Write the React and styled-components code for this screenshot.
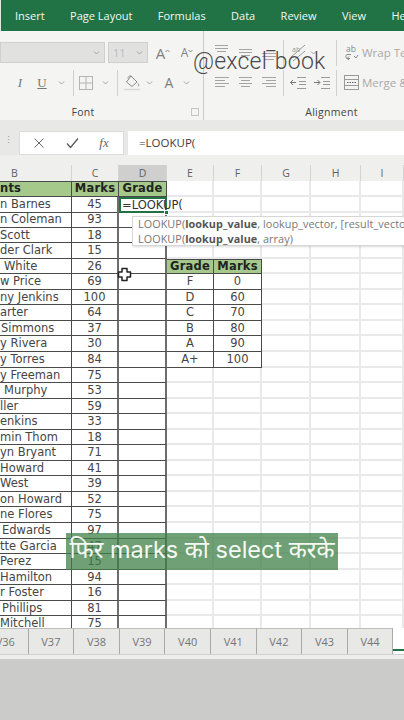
import styled, { createGlobalStyle } from "styled-components";

const GlobalStyle = createGlobalStyle`
  html, body { margin: 0; padding: 0; background: #fff; }
  body { font-family: "Open Sans", "Liberation Sans", sans-serif; }
`;

const Page = styled.div`
  position: relative;
  width: 404px;
  height: 720px;
  overflow: hidden;
  display: flex;
  flex-direction: column;
`;

/* ribbon */
const TabBar = styled.div`
  height: 31px;
  flex: none;
  background: #217346;
  display: flex;
  align-items: center;
  gap: 25.4px;
  padding-left: 15px;
  box-shadow: inset 1px 0 0 #dfe9e3;
  padding-bottom: 1px;
  box-sizing: border-box;
`;

const TabName = styled.span`
  color: #f2f7f4;
  font-size: 11px;
  font-weight: 500;
  white-space: nowrap;
`;

const Ribbon = styled.div`
  height: 89px;
  flex: none;
  background: #f4f4f3;
  display: flex;
`;

const Group = styled.div`
  flex: none;
  width: ${(p) => p.$w}px;
  box-sizing: border-box;
  border-right: 1.5px solid #cbcbcb;
  display: flex;
  flex-direction: column;
  padding-top: 11px;
`;

const ToolRow = styled.div`
  height: 21px;
  display: flex;
  align-items: center;
  margin-bottom: 9px;
`;

const Slot = styled.div`
  flex: none;
  width: ${(p) => p.$w}px;
  height: 100%;
  display: flex;
  align-items: center;
  justify-content: center;
  color: #7d7d7d;
  font-size: ${(p) => p.$size || 12}px;
`;

const Sep = styled.div`
  flex: none;
  width: 1px;
  height: 26px;
  background: #cfcfcf;
`;

const FontBox = styled.div`
  flex: none;
  width: ${(p) => p.$w}px;
  height: 21px;
  margin-right: ${(p) => p.$gap}px;
  box-sizing: border-box;
  background: #e1e1e0;
  border: 1px solid #cfcfcf;
  display: flex;
  align-items: center;
  justify-content: space-between;
  padding: 0 4px 0 4px;
  color: #bcbcbc;
  font-size: 11px;
`;

const GroupLabel = styled.div`
  margin-top: auto;
  height: 15px;
  margin-bottom: 1px;
  display: flex;
  align-items: center;
  justify-content: center;
  position: relative;
  padding-right: ${(p) => p.$pad}px;
  font-size: 10.5px;
  letter-spacing: 0.3px;
  color: #444;
`;

const Launcher = styled.span`
  position: absolute;
  right: 4px;
  top: 4px;
  width: 6px;
  height: 6px;
  border: 1px solid #c4c4c4;
`;

const ToolText = styled.span`
  color: #a9a9a9;
  font-size: 11.5px;
  margin-left: 3px;
  white-space: nowrap;
`;

const BigA = styled.span`
  font-family: "Open Sans", sans-serif;
  font-size: ${(p) => p.$size}px;
  color: #808080;
`;

const Letter = styled.span`
  font-family: "Liberation Serif", serif;
  font-size: 13px;
  font-style: ${(p) => (p.$italic ? "italic" : "normal")};
  text-decoration: ${(p) => (p.$under ? "underline" : "none")};
  color: #777;
`;

/* formula bar */
const FormulaStrip = styled.div`
  flex: none;
  background: #e8e8e7;
  box-sizing: border-box;
  padding: 11px 0 0 4px;
  display: flex;
  border-bottom: 10px solid #efefee;
  height: 45px;
`;

const Grip = styled.div`
  width: 15px;
  flex: none;
  color: #9a9a9a;
  font-size: 9px;
  line-height: 6px;
  padding-top: 6px;
`;

const NameButtons = styled.div`
  flex: none;
  width: 105px;
  background: #fff;
  border: 1px solid #dcdcdc;
  box-sizing: border-box;
  margin-right: 4px;
  display: flex;
  align-items: center;
  justify-content: space-around;
  padding: 0 4px 0 3px;
  height: 24px;
  color: #5d5d5d;
`;

const FxLabel = styled.span`
  font-family: "Liberation Serif", serif;
  font-style: italic;
  font-size: 13px;
  color: #666;
`;

const FormulaInput = styled.div`
  flex: 1;
  background: #fff;
  height: 24px;
  box-sizing: border-box;
  padding-left: 11px;
  line-height: 24px;
  font-size: 11.5px;
  color: #3c3c3c;
`;

/* sheet */
const Sheet = styled.div`
  position: relative;
  flex: none;
  height: 463px;
  overflow: hidden;
  background: #fff;
`;

const columns = "72px 47px 48px 47px 48px 49px 50px 43px";

const HeaderRow = styled.div`
  display: grid;
  grid-template-columns: ${columns};
  height: 16px;
  background: #efefee;
`;

const HeaderCell = styled.div`
  border-right: 1px solid #d4d4d4;
  background: ${(p) => (p.$active ? "#cfcfce" : "transparent")};
  text-align: center;
  padding-right: ${(p) => p.$pad || 0}px;
  font-family: "Open Sans", sans-serif;
  font-size: 10.5px;
  line-height: 16px;
  color: #5f5f5f;
`;

const Row = styled.div`
  display: grid;
  grid-template-columns: ${columns};
  height: 15.55px;
`;

const Cell = styled.div`
  box-sizing: border-box;
  position: relative;
  white-space: nowrap;
  overflow: ${(p) => (p.$active ? "visible" : "hidden")};
  z-index: ${(p) => (p.$active ? 2 : "auto")};
  font-family: "DejaVu Sans", Verdana, sans-serif;
  font-size: 11.5px;
  line-height: 14.5px;
  color: #454545;
  text-align: ${(p) => (p.$left ? "left" : "center")};
  padding-left: ${(p) => p.$indent || 0}px;
  border-right: ${(p) => (p.$rule === "thick" ? "2px solid #6d6d6d" : p.$table ? "1px solid #4a4a4a" : "2px solid #e9e9e9")};
  border-bottom: ${(p) => (p.$table ? "1px solid #4a4a4a" : "2px solid #e9e9e9")};
  ${(p) => p.$topEdge && "box-shadow: inset 0 1px 0 #4a4a4a;"}
  ${(p) =>
    p.$head &&
    `background: #a5c98a; font-weight: 700; color: #222; letter-spacing: 0.2px;`}
  ${(p) =>
    p.$active &&
    `box-shadow: inset 0 0 0 2px #217346; border: none; line-height: 16px; padding-left: 3px; text-align: left; color: #333;
     &::after { content: ""; position: absolute; right: -2px; bottom: -2px; width: 5px; height: 5px; background: #217346; border: 1px solid #fff; box-sizing: border-box; }`}
`;

const Tooltip = styled.div`
  position: absolute;
  left: 132px;
  top: 51px;
  width: 300px;
  height: 30px;
  box-sizing: border-box;
  background: #fff;
  border: 1px solid #d6d6d6;
  box-shadow: 1px 1px 2px rgba(0, 0, 0, 0.15);
  padding: 0 0 0 5px;
  font-family: "Open Sans", sans-serif;
  font-size: 10.8px;
  letter-spacing: 0.08px;
  line-height: 14.5px;
  color: #777;
  white-space: nowrap;
  z-index: 3;

  b {
    color: #555;
    font-weight: 700;
  }
`;

const CursorMark = styled.svg`
  position: absolute;
  left: 117px;
  top: 102px;
  z-index: 3;
`;

/* sheet tabs */
const SheetTabs = styled.div`
  flex: none;
  height: 26px;
  display: flex;
  background: #fff;
  margin-left: -17px;
`;

const SheetTab = styled.div`
  flex: none;
  width: 45.6px;
  box-sizing: border-box;
  background: #e8e8e7;
  border-top: 1px solid #bdbdbd;
  border-right: 1px solid #a9a9a9;
  display: flex;
  align-items: center;
  justify-content: center;
  font-size: 11px;
  color: #757575;
`;

const SheetTabEnd = styled.div`
  flex: 1;
  border-bottom: 2px solid #217346;
  margin-bottom: 3px;
`;

const StatusLine = styled.div`
  flex: none;
  height: 5px;
  background: #eeeeed;
  border-top: 1px solid #cfcfcf;
  box-sizing: border-box;
`;

const Desk = styled.div`
  flex: 1;
  background: #cbcbca;
`;

/* things lying over the picture */
const Watermark = styled.div`
  position: absolute;
  left: 193px;
  top: 47px;
  font-family: Roboto, "Open Sans", sans-serif;
  font-weight: 300;
  font-size: 23px;
  line-height: 30px;
  letter-spacing: 0.2px;
  color: #4a4a4a;
  z-index: 5;
  white-space: nowrap;
`;

const Caption = styled.div`
  position: absolute;
  left: 66px;
  top: 533px;
  width: 272px;
  height: 37px;
  padding-bottom: 5px;
  box-sizing: border-box;
  background: rgba(62, 128, 70, 0.74);
  display: flex;
  align-items: center;
  justify-content: center;
  font-family: Inter, "Noto Sans", "DejaVu Sans", sans-serif;
  font-size: 23.5px;
  color: #f5f8f3;
  white-space: nowrap;
  z-index: 6;
`;

const Lines = ({ w = 14, rows }) => (
  <svg width={w} height="15" viewBox={`0 0 ${w} 15`} fill="none" stroke="#a4a4a4" strokeWidth="1">
    {rows.map(([y, a, b]) => (
      <line key={y} x1={a} x2={b} y1={y + 0.5} y2={y + 0.5} />
    ))}
  </svg>
);

const Chevron = () => (
  <svg width="7" height="4" viewBox="0 0 7 4" fill="none" stroke="#a2a2a2" strokeWidth="1">
    <path d="M1 .5 3.500 3 6 .5" />
  </svg>
);

const students = [
  ["n Barnes", 45, 0],
  ["n Coleman", 93, 0],
  ["Scott", 18, 0],
  ["der Clark", 15, 0],
  ["White", 26, 4],
  ["w Price", 69, 0],
  ["ny Jenkins", 100, 0],
  ["arter", 64, 0],
  ["Simmons", 37, 1],
  ["y Rivera", 30, 0],
  ["y Torres", 84, 0],
  ["y Freeman", 75, 0],
  ["Murphy", 53, 4],
  ["ller", 59, 0],
  ["enkins", 33, 0],
  ["min Thom", 18, 0],
  ["yn Bryant", 71, 0],
  ["Howard", 41, 0],
  ["West", 39, 0],
  ["on Howard", 52, 0],
  ["ne Flores", 75, 0],
  ["Edwards", 97, 2],
  ["tte Garcia", 47, 0],
  ["Perez", 15, 0],
  ["Hamilton", 94, 0],
  ["r Foster", 16, 0],
  ["Phillips", 81, 2],
  ["Mitchell", 75, 0],
];

const gradeTable = [
  ["F", 0],
  ["D", 60],
  ["C", 70],
  ["B", 80],
  ["A", 90],
  ["A+", 100],
];

const App = () => {
  const rows = [["nts", "Marks", 0], ...students, ["", "", 0]];
  return (
    <Page>
      <GlobalStyle />
      <TabBar>
        {["Insert", "Page Layout", "Formulas", "Data", "Review", "View", "Help"].map((t) => (
          <TabName key={t}>{t}</TabName>
        ))}
      </TabBar>

      <Ribbon>
        <Group $w={204}>
          <ToolRow>
            <FontBox $w={105} $gap={3}>
              <span />
              <Chevron />
            </FontBox>
            <FontBox $w={40} $gap={0}>
              <span>11</span>
              <Chevron />
            </FontBox>
            <Slot $w={30}>
              <BigA $size={15}>A</BigA>
              <svg width="5" height="8" viewBox="0 0 5 8" fill="none" stroke="#888">
                <path d="M.5 3 2.500 1 4.500 3" />
              </svg>
            </Slot>
            <Slot $w={18}>
              <BigA $size={12}>A</BigA>
              <svg width="5" height="8" viewBox="0 0 5 8" fill="none" stroke="#888">
                <path d="M.5 1 2.500 3 4.500 1" />
              </svg>
            </Slot>
          </ToolRow>
          <ToolRow>
            <Slot $w={10} />
            <Slot $w={20}>
              <Letter $italic>I</Letter>
            </Slot>
            <Slot $w={24}>
              <Letter $under>U</Letter>
            </Slot>
            <Slot $w={15}>
              <Chevron />
            </Slot>
            <Slot $w={4} />
            <Sep />
            <Slot $w={5} />
            <Slot $w={14}>
              <svg width="14" height="14" viewBox="0 0 14 14" fill="none" stroke="#b4b4b4">
                <rect x=".5" y=".5" width="13" height="13" />
                <path d="M7 .5V13.500M.5 7H13.500" />
              </svg>
            </Slot>
            <Slot $w={24}>
              <Chevron />
            </Slot>
            <Sep />
            <Slot $w={6} />
            <Slot $w={16}>
              <svg width="16" height="17" viewBox="0 0 16 17" fill="none" stroke="#8a8a8a">
                <path d="M7 2 13 8 8 12.500 2.500 8Z" />
                <path d="M4 4.500C4 2 7 1 8 3" />
                <path d="M14 9.500c1 1.500 1 2.500 0 2.800" />
                <path d="M0 15.500H16" stroke="#d8d8d8" strokeWidth="1.500" />
              </svg>
            </Slot>
            <Slot $w={19}>
              <Chevron />
            </Slot>
            <Slot $w={20}>
              <BigA $size={14}>A</BigA>
            </Slot>
            <Slot $w={14}>
              <Chevron />
            </Slot>
          </ToolRow>
          <GroupLabel $pad={37}>
            Font
            <Launcher />
          </GroupLabel>
        </Group>

        <Group $w={260}>
          <ToolRow>
            <Slot $w={11} />
            <Slot $w={13}>
              <Lines w={13} rows={[[0, 0, 13], [3, 0, 13], [6, 2, 11]]} />
            </Slot>
            <Slot $w={11} />
            <Slot $w={13}>
              <Lines w={13} rows={[[4, 0, 13], [7, 0, 13], [10, 2, 11]]} />
            </Slot>
            <Slot $w={10} />
            <Slot $w={14}>
              <Lines rows={[[8, 0, 14], [11, 0, 14], [14, 2, 12]]} />
            </Slot>
            <Slot $w={7} />
            <Sep />
            <Slot $w={6} />
            <Slot $w={17}>
              <svg width="17" height="19" viewBox="0 0 17 19" fill="none" stroke="#9a9a9a">
                <path d="M1 14 15 2M3 18 15 8" />
                <text x="2" y="9" fontSize="7" fill="#9a9a9a" stroke="none">ab</text>
              </svg>
            </Slot>
            <Slot $w={12}>
              <Chevron />
            </Slot>
            <Slot $w={17} />
            <Sep />
            <Slot $w={8} />
            <Slot $w={14}>
              <svg width="14" height="17" viewBox="0 0 14 17" fill="none" stroke="#8a8a8a">
                <text x="1" y="8" fontSize="8.500" fill="#8a8a8a" stroke="none">ab</text>
                <path d="M6 10.500H2c-1.500 0-1.500 4 0 4H5M4 12.500 2 14.500 4 16" />
                <path d="M9 12l2 2 2-3" />
              </svg>
            </Slot>
            <ToolText>Wrap Text</ToolText>
          </ToolRow>
          <ToolRow>
            <Slot $w={11} />
            <Slot $w={14}>
              <Lines rows={[[2, 0, 14], [5, 0, 10], [8, 0, 14], [11, 0, 10]]} />
            </Slot>
            <Slot $w={10} />
            <Slot $w={13}>
              <Lines w={13} rows={[[2, 0, 13], [5, 2, 11], [8, 0, 13], [11, 2, 11]]} />
            </Slot>
            <Slot $w={10} />
            <Slot $w={14}>
              <Lines rows={[[2, 0, 14], [5, 4, 14], [8, 0, 14], [11, 4, 14]]} />
            </Slot>
            <Slot $w={7} />
            <Sep />
            <Slot $w={6} />
            <Slot $w={16}>
              <svg width="16" height="15" viewBox="0 0 16 15" fill="none" stroke="#9a9a9a">
                <path d="M7 2.500H16M9 6.500H16M9 9.500H16M7 13.500H16" />
                <path d="M6 7.500H0.500M3 5 .5 7.500 3 10" stroke="#777" />
              </svg>
            </Slot>
            <Slot $w={8} />
            <Slot $w={16}>
              <svg width="16" height="15" viewBox="0 0 16 15" fill="none" stroke="#9a9a9a">
                <path d="M7 2.500H16M9 6.500H16M9 9.500H16M7 13.500H16" />
                <path d="M0 7.500H6M3.500 5 6 7.500 3.500 10" stroke="#777" />
              </svg>
            </Slot>
            <Slot $w={6} />
            <Sep />
            <Slot $w={7} />
            <Slot $w={15}>
              <svg width="15" height="15" viewBox="0 0 15 15" fill="none" stroke="#9a9a9a">
                <rect x=".5" y=".5" width="14" height="14" />
                <path d="M.5 4.500H14.500M.5 10.500H14.500" />
                <path d="M3 7.500H12" strokeDasharray="1.500 1" stroke="#666" />
              </svg>
            </Slot>
            <ToolText>Merge &amp; Center</ToolText>
          </ToolRow>
          <GroupLabel $pad={4}>Alignment</GroupLabel>
        </Group>
      </Ribbon>

      <FormulaStrip>
        <Grip>⋮</Grip>
        <NameButtons>
          <svg width="12" height="12" viewBox="0 0 12 12" fill="none" stroke="#666" strokeWidth="1">
            <path d="M1.500 1.500 10.500 10.500M10.500 1.500 1.500 10.500" />
          </svg>
          <svg width="13" height="12" viewBox="0 0 13 12" fill="none" stroke="#555" strokeWidth="1.200">
            <path d="M1 6.500 4.500 10.500 12 1.500" />
          </svg>
          <FxLabel>fx</FxLabel>
        </NameButtons>
        <FormulaInput>=LOOKUP(</FormulaInput>
      </FormulaStrip>

      <Sheet>
        <HeaderRow>
          <HeaderCell $pad={42}>B</HeaderCell>
          <HeaderCell>C</HeaderCell>
          <HeaderCell $active>D</HeaderCell>
          <HeaderCell>E</HeaderCell>
          <HeaderCell>F</HeaderCell>
          <HeaderCell>G</HeaderCell>
          <HeaderCell>H</HeaderCell>
          <HeaderCell>I</HeaderCell>
        </HeaderRow>
        {rows.map(([name, mark, indent], i) => {
          const head = i === 0;
          const inStudents = i <= 28;
          const grade = i >= 5 && i <= 11;
          const lookup = gradeTable[i - 6];
          return (
            <Row key={i}>
              <Cell $left $indent={indent} $table={inStudents} $head={head} $topEdge={head}>
                {name}
              </Cell>
              <Cell $table={inStudents} $rule={head ? "" : "thick"} $head={head} $topEdge={head}>
                {mark}
              </Cell>
              {i === 1 ? (
                <Cell $active>=LOOKUP(</Cell>
              ) : (
                <Cell $table={inStudents} $rule={head ? "" : "thick"} $head={head} $topEdge={head}>
                  {head ? "Grade" : ""}
                </Cell>
              )}
              <Cell $table={grade} $head={i === 5} $topEdge={i === 5}>
                {i === 5 ? "Grade" : lookup ? lookup[0] : ""}
              </Cell>
              <Cell $table={grade} $head={i === 5} $topEdge={i === 5}>
                {i === 5 ? "Marks" : lookup ? lookup[1] : ""}
              </Cell>
              <Cell />
              <Cell />
              <Cell />
            </Row>
          );
        })}
        <Tooltip>
          LOOKUP(<b>lookup_value</b>, lookup_vector, [result_vector])
          <br />
          LOOKUP(<b>lookup_value</b>, array)
        </Tooltip>
        <CursorMark width="15" height="15" viewBox="0 0 15 15">
          <path
            d="M5 1.500H10V5H13.500V10H10V13.500H5V10H1.500V5H5Z"
            fill="#fff"
            stroke="#222"
            strokeWidth="1.500"
            strokeLinejoin="round"
          />
        </CursorMark>
      </Sheet>

      <SheetTabs>
        {["V36", "V37", "V38", "V39", "V40", "V41", "V42", "V43", "V44"].map((v) => (
          <SheetTab key={v}>{v}</SheetTab>
        ))}
        <SheetTabEnd />
      </SheetTabs>
      <StatusLine />
      <Desk />

      <Watermark>@excel‾book</Watermark>
      <Caption>फिर marks को select करके</Caption>
    </Page>
  );
};

export default App;
